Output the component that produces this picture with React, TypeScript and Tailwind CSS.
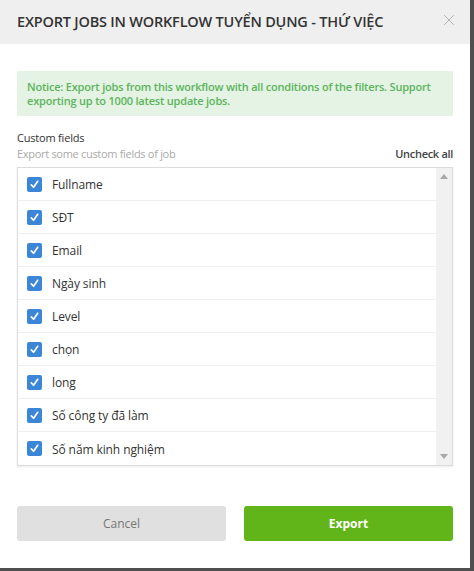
import { X } from "lucide-react"

const fields = [
  "Fullname",
  "SĐT",
  "Email",
  "Ngày sinh",
  "Level",
  "chọn",
  "long",
  "Số công ty đã làm",
  "Số năm kinh nghiệm",
]

function CheckBox() {
  return (
    <span className="w-[15px] h-[15px] rounded-[2px] bg-[#3c86d8] flex items-center justify-center shrink-0">
      <svg width="11" height="11" viewBox="0 0 12 12" fill="none">
        <path d="M2.5 6.5 L5 9 L9.5 2.5" stroke="white" strokeWidth="1.8" strokeLinecap="round" strokeLinejoin="round" />
      </svg>
    </span>
  )
}

export default function App() {
  return (
    <div
      className="w-[474px] h-[571px] bg-[#4f4f4f] overflow-hidden"
      style={{ fontFamily: '"Open Sans", "Noto Sans", sans-serif' }}
    >
      <div className="w-[470px] h-[568px] bg-white flex flex-col">
        <div className="h-[44px] bg-[#efefef] flex items-center justify-between pl-[17px] pr-[12px] shrink-0">
          <h1 className="text-[14.5px] font-semibold text-[#333] tracking-[-0.2px]">
            EXPORT JOBS IN WORKFLOW TUYỂN DỤNG - THỨ VIỆC
          </h1>
          <X size={18} strokeWidth={1.3} className="text-[#b0b0b0] -mt-[4px]" />
        </div>

        <div className="px-[17px] pt-[27px]">
          <div className="bg-[#e4f3e4] px-[10px] py-[9px] text-[11px] font-semibold text-[#5cb45c] leading-[13.5px] tracking-[-0.2px]">
            Notice: Export jobs from this workflow with all conditions of the filters. Support
            exporting up to 1000 latest update jobs.
          </div>

          <div className="mt-[14px] text-[11px] text-[#333] leading-[16px] tracking-[-0.2px]">
            Custom fields
          </div>
          <div className="flex items-center justify-between text-[11px] leading-[16px] tracking-[-0.3px]">
            <span className="text-[#aaa]">Export some custom fields of job</span>
            <span className="font-semibold text-[#444]">Uncheck all</span>
          </div>

          <div className="mt-[5px] h-[299px] border border-[#dcdcdc] flex shadow-[0_1px_2px_rgba(0,0,0,0.08)]">
            <div className="flex-1 flex flex-col">
              {fields.map((f, i) => (
                <div
                  key={f}
                  className={
                    "h-[33px] flex items-center pl-[9px] gap-[10px] " +
                    (i < fields.length - 1 ? "border-b border-[#efefef]" : "")
                  }
                >
                  <CheckBox />
                  <span className="text-[12px] text-[#333] tracking-[-0.1px] mt-[2px]">{f}</span>
                </div>
              ))}
            </div>
            <div className="w-[16px] bg-[#f1f1f1] flex flex-col justify-between items-center py-[6px]">
              <svg width="8" height="5" viewBox="0 0 8 5">
                <path d="M0 5 L4 0 L8 5 Z" fill="#a8a8a8" />
              </svg>
              <svg width="8" height="5" viewBox="0 0 8 5">
                <path d="M0 0 L4 5 L8 0 Z" fill="#a8a8a8" />
              </svg>
            </div>
          </div>

          <div className="mt-[40px] flex gap-[18px]">
            <button className="flex-1 h-[35px] rounded-[3px] bg-[#e0e0e0] text-[12px] text-[#777]">
              Cancel
            </button>
            <button className="flex-1 h-[35px] rounded-[3px] bg-[#62b518] text-[12px] font-bold text-white">
              Export
            </button>
          </div>
        </div>
      </div>
    </div>
  )
}
